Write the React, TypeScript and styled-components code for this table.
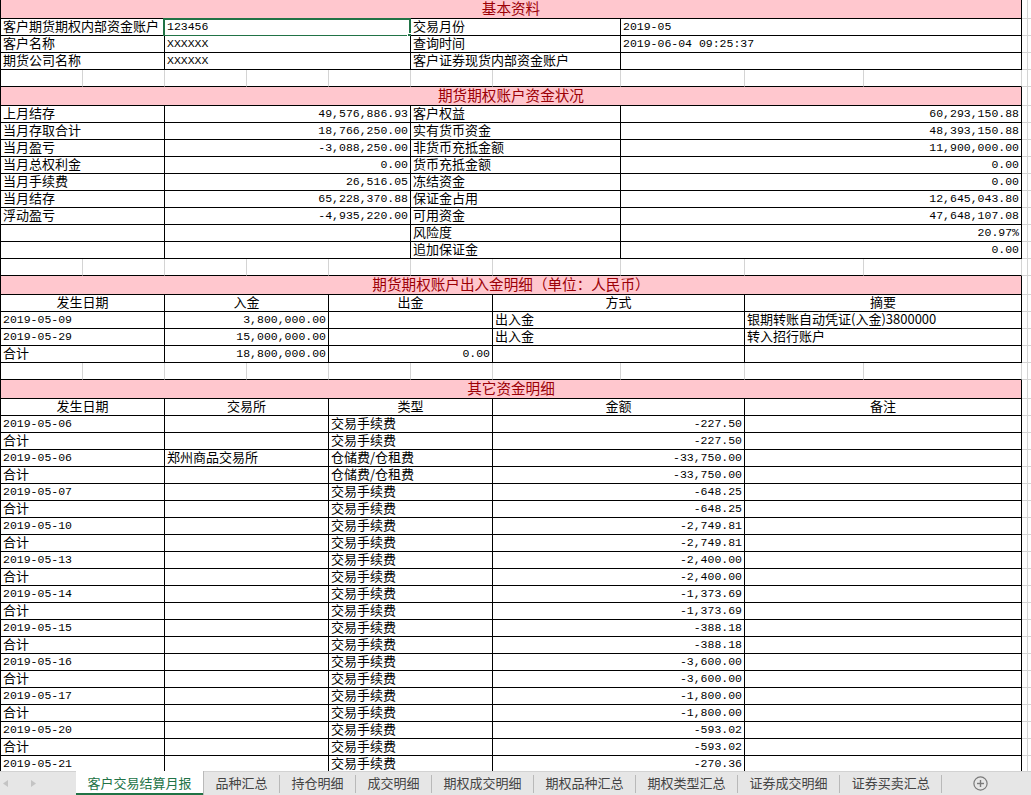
import React from 'react';
import styled, { createGlobalStyle } from 'styled-components';

const PINK = '#ffc7ce';
const DARKRED = '#9c0006';
const GRID = '#d4d4d4';
const BLACK = '#000';
const GREEN = '#217346';
const COLS = '82px 82px 82px 82px 82px 82px 128px 124px 119px 158px 6px 1fr';

const GlobalStyle = createGlobalStyle`
  html, body { margin: 0; padding: 0; background: #fff; }
  body {
    width: 1031px;
    height: 795px;
    overflow: hidden;
    font-family: "Noto Sans CJK SC", "Noto Sans", sans-serif;
  }
`;

const Page = styled.div`
  display: flex;
  flex-direction: column;
  width: 1031px;
  height: 795px;
`;

const Sheet = styled.div`
  height: 771px;
  overflow: hidden;
  border-left: 1px solid ${BLACK};
  display: flex;
  flex-direction: column;
  flex: none;
`;

const Row = styled.div<{ $h: number }>`
  display: grid;
  grid-template-columns: ${COLS};
  height: ${(p) => p.$h}px;
  flex: none;
`;

type Align = 'l' | 'r' | 'c';

const Cell = styled.div<{ $span?: number; $align?: Align; $right?: string; $bottom?: string; $fill?: string }>`
  grid-column: span ${(p) => p.$span ?? 1};
  box-sizing: border-box;
  min-width: 0;
  position: relative;
  border-right: ${(p) => (p.$right === 'none' ? '0' : `1px solid ${p.$right ?? GRID}`)};
  border-bottom: 1px solid ${(p) => p.$bottom ?? GRID};
  background: ${(p) => p.$fill ?? '#fff'};
  display: block;
  text-align: ${(p) => (p.$align === 'r' ? 'right' : p.$align === 'c' ? 'center' : 'left')};
  padding: 1px 2px 0 2px;
  font-size: 13px;
  line-height: 12px;
  color: #000;
  white-space: nowrap;
`;

const TitleCell = styled(Cell)`
  font-size: 14.6px;
  line-height: 15px;
  padding-top: 0;
  color: ${DARKRED};
`;

const Mono = styled.span`
  font-family: "Liberation Mono", "DejaVu Sans Mono", monospace;
  font-size: 11.5px;
  vertical-align: 1px;
`;

const Selection = styled.div`
  position: absolute;
  left: -2px;
  top: -1px;
  right: -1px;
  bottom: -2px;
  border: 2px solid ${GREEN};
  pointer-events: none;
`;

const Handle = styled.div`
  position: absolute;
  right: -4px;
  bottom: -4px;
  width: 5px;
  height: 5px;
  background: ${GREEN};
  box-shadow: 0 0 0 1px #fff;
`;

/* ---------- tab bar ---------- */
const TabBar = styled.div`
  height: 24px;
  flex: none;
  display: flex;
  align-items: stretch;
  background: #e6e6e6;
  box-sizing: border-box;
  border-top: 1px solid #d2d2d2;
`;

const Nav = styled.div`
  width: 76px;
  flex: none;
  display: flex;
  align-items: center;
  gap: 23px;
  padding-left: 3px;
  box-sizing: border-box;
`;

const Arrow = styled.svg`
  width: 5px;
  height: 7px;
  fill: #c4c4c4;
`;

const Tab = styled.div<{ $active?: boolean }>`
  position: relative;
  display: flex;
  align-items: center;
  padding: ${(p) => (p.$active ? '1px' : '0')} 11.5px 0 11.5px;
  margin-top: ${(p) => (p.$active ? '-1px' : '0')};
  font-size: 13px;
  color: ${(p) => (p.$active ? GREEN : '#444')};
  background: ${(p) => (p.$active ? '#fff' : 'transparent')};
  box-sizing: border-box;
  border-bottom: 2px solid ${(p) => (p.$active ? GREEN : 'transparent')};
  border-right: 1px solid transparent;
  white-space: nowrap;
  &::after {
    content: '';
    position: absolute;
    right: -1px;
    top: ${(p) => (p.$active ? '0' : '3px')};
    bottom: ${(p) => (p.$active ? '-2px' : '0')};
    width: 1px;
    background: #b9b9b9;
  }
`;

const AddButton = styled.div`
  display: flex;
  align-items: center;
  margin-left: 31px;
`;

/* ---------- data ---------- */
type C = { t?: string; s: number; a?: Align; sel?: boolean };

const basic: C[][] = [
  [{ t: '客户期货期权内部资金账户', s: 2 }, { t: '123456', s: 3, sel: true }, { t: '交易月份', s: 2 }, { t: '2019-05', s: 3 }],
  [{ t: '客户名称', s: 2 }, { t: 'XXXXXX', s: 3 }, { t: '查询时间', s: 2 }, { t: '2019-06-04 09:25:37', s: 3 }],
  [{ t: '期货公司名称', s: 2 }, { t: 'XXXXXX', s: 3 }, { t: '客户证券现货内部资金账户', s: 2 }, { t: '', s: 3 }],
];

const fundPairs: [string, string, string, string][] = [
  ['上月结存', '49,576,886.93', '客户权益', '60,293,150.88'],
  ['当月存取合计', '18,766,250.00', '实有货币资金', '48,393,150.88'],
  ['当月盈亏', '-3,088,250.00', '非货币充抵金额', '11,900,000.00'],
  ['当月总权利金', '0.00', '货币充抵金额', '0.00'],
  ['当月手续费', '26,516.05', '冻结资金', '0.00'],
  ['当月结存', '65,228,370.88', '保证金占用', '12,645,043.80'],
  ['浮动盈亏', '-4,935,220.00', '可用资金', '47,648,107.08'],
  ['', '', '风险度', '20.97%'],
  ['', '', '追加保证金', '0.00'],
];
const funds: C[][] = fundPairs.map(([a, b, c, d]) => [
  { t: a, s: 2 },
  { t: b, s: 3, a: 'r' },
  { t: c, s: 2 },
  { t: d, s: 3, a: 'r' },
]);

const header = (names: string[]): C[] => names.map((t) => ({ t, s: 2, a: 'c' as Align }));

const cashRows: C[][] = [
  header(['发生日期', '入金', '出金', '方式', '摘要']),
  [{ t: '2019-05-09', s: 2 }, { t: '3,800,000.00', s: 2, a: 'r' }, { t: '', s: 2 }, { t: '出入金', s: 2 }, { t: '银期转账自动凭证(入金)3800000', s: 2 }],
  [{ t: '2019-05-29', s: 2 }, { t: '15,000,000.00', s: 2, a: 'r' }, { t: '', s: 2 }, { t: '出入金', s: 2 }, { t: '转入招行账户', s: 2 }],
  [{ t: '合计', s: 2 }, { t: '18,800,000.00', s: 2, a: 'r' }, { t: '0.00', s: 2, a: 'r' }, { t: '', s: 2 }, { t: '', s: 2 }],
];

const otherData: [string, string, string, string][] = [
  ['2019-05-06', '', '交易手续费', '-227.50'],
  ['合计', '', '交易手续费', '-227.50'],
  ['2019-05-06', '郑州商品交易所', '仓储费/仓租费', '-33,750.00'],
  ['合计', '', '仓储费/仓租费', '-33,750.00'],
  ['2019-05-07', '', '交易手续费', '-648.25'],
  ['合计', '', '交易手续费', '-648.25'],
  ['2019-05-10', '', '交易手续费', '-2,749.81'],
  ['合计', '', '交易手续费', '-2,749.81'],
  ['2019-05-13', '', '交易手续费', '-2,400.00'],
  ['合计', '', '交易手续费', '-2,400.00'],
  ['2019-05-14', '', '交易手续费', '-1,373.69'],
  ['合计', '', '交易手续费', '-1,373.69'],
  ['2019-05-15', '', '交易手续费', '-388.18'],
  ['合计', '', '交易手续费', '-388.18'],
  ['2019-05-16', '', '交易手续费', '-3,600.00'],
  ['合计', '', '交易手续费', '-3,600.00'],
  ['2019-05-17', '', '交易手续费', '-1,800.00'],
  ['合计', '', '交易手续费', '-1,800.00'],
  ['2019-05-20', '', '交易手续费', '-593.02'],
  ['合计', '', '交易手续费', '-593.02'],
  ['2019-05-21', '', '交易手续费', '-270.36'],
];
const otherRows: C[][] = [
  header(['发生日期', '交易所', '类型', '金额', '备注']),
  ...otherData.map(([d, e, t, m]) => [
    { t: d, s: 2 },
    { t: e, s: 2 },
    { t: t, s: 2 },
    { t: m, s: 2, a: 'r' as Align },
    { t: '', s: 2 },
  ]),
];

const tabs = ['客户交易结算月报', '品种汇总', '持仓明细', '成交明细', '期权成交明细', '期权品种汇总', '期权类型汇总', '证券成交明细', '证券买卖汇总'];

/* ---------- pieces ---------- */
const isAscii = (s: string) => /^[\x20-\x7e]+$/.test(s);

const Text: React.FC<{ t?: string }> = ({ t }) => {
  if (!t) return null;
  return isAscii(t) ? <Mono>{t}</Mono> : <>{t}</>;
};

const Tail: React.FC = () => (
  <>
    <Cell />
    <Cell $right="none" />
  </>
);

const DataRow: React.FC<{ cells: C[] }> = ({ cells }) => (
  <Row $h={17}>
    {cells.map((c, i) => (
      <Cell key={i} $span={c.s} $align={c.a} $right={BLACK} $bottom={BLACK}>
        <Text t={c.t} />
        {c.sel && (
          <Selection>
            <Handle />
          </Selection>
        )}
      </Cell>
    ))}
    <Tail />
  </Row>
);

const BlankRow: React.FC = () => (
  <Row $h={17}>
    {Array.from({ length: 10 }).map((_, i) => (
      <Cell key={i} $bottom={BLACK} />
    ))}
    <Tail />
  </Row>
);

const TitleRow: React.FC<{ title: string; h?: number }> = ({ title, h = 19 }) => (
  <Row $h={h}>
    <TitleCell $span={10} $align="c" $fill={PINK} $right={BLACK} $bottom={BLACK}>
      {title}
    </TitleCell>
    <Tail />
  </Row>
);

export default function App() {
  return (
    <Page>
      <GlobalStyle />
      <Sheet>
        <TitleRow title="基本资料" h={19} />
        {basic.map((r, i) => (
          <DataRow key={`b${i}`} cells={r} />
        ))}
        <BlankRow />
        <TitleRow title="期货期权账户资金状况" />
        {funds.map((r, i) => (
          <DataRow key={`f${i}`} cells={r} />
        ))}
        <BlankRow />
        <TitleRow title="期货期权账户出入金明细（单位：人民币）" />
        {cashRows.map((r, i) => (
          <DataRow key={`c${i}`} cells={r} />
        ))}
        <BlankRow />
        <TitleRow title="其它资金明细" />
        {otherRows.map((r, i) => (
          <DataRow key={`o${i}`} cells={r} />
        ))}
      </Sheet>
      <TabBar>
        <Nav>
          <Arrow viewBox="0 0 5 7">
            <polygon points="5,0 5,7 0,3.5" />
          </Arrow>
          <Arrow viewBox="0 0 5 7">
            <polygon points="0,0 0,7 5,3.5" />
          </Arrow>
        </Nav>
        {tabs.map((t, i) => (
          <Tab key={t} $active={i === 0}>
            {t}
          </Tab>
        ))}
        <AddButton>
          <svg width="15" height="15" viewBox="0 0 15 15">
            <circle cx="7.5" cy="7.5" r="6.6" fill="none" stroke="#7a7a7a" strokeWidth="1.2" />
            <line x1="7.5" y1="4" x2="7.5" y2="11" stroke="#7a7a7a" strokeWidth="1.4" />
            <line x1="4" y1="7.5" x2="11" y2="7.5" stroke="#7a7a7a" strokeWidth="1.4" />
          </svg>
        </AddButton>
      </TabBar>
    </Page>
  );
}
